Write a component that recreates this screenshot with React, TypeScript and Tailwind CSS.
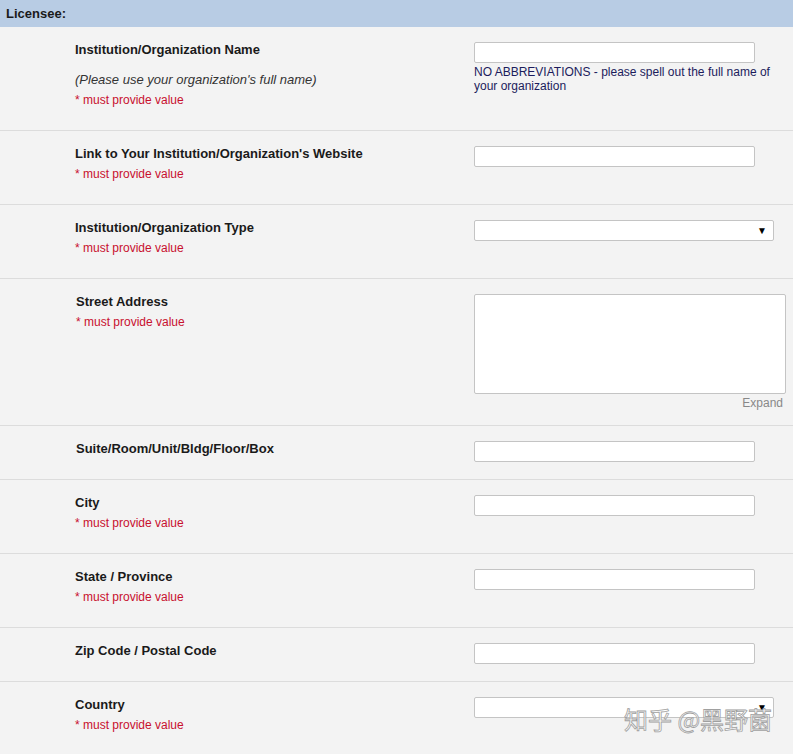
import React from "react";

const font = { fontFamily: '"Liberation Sans", Arial, sans-serif' };

function Req() {
  return <div className="mt-[6px] text-[12px] leading-[15px] text-[#c8102e]">* must provide value</div>;
}

function Input() {
  return <div className="h-[21px] w-[281px] rounded-[2px] border border-[#c4c4c4] bg-white" />;
}

function Select() {
  return (
    <div className="flex h-[21px] w-[300px] items-center justify-end rounded-[2px] border border-[#c4c4c4] bg-white pr-[6px]">
      <span className="text-[10px] leading-none text-black">▼</span>
    </div>
  );
}

function Row({
  h,
  label,
  req,
  italic,
  pl = "pl-[75px]",
  last,
  children,
}: {
  h: string;
  label: string;
  req?: boolean;
  italic?: string;
  pl?: string;
  last?: boolean;
  children: React.ReactNode;
}) {
  return (
    <div className={`flex pt-[15px] ${h} ${last ? "" : "border-b border-[#dcdcdc]"}`}>
      <div className={`w-[474px] shrink-0 ${pl}`}>
        <div className="text-[13px] font-bold leading-[15px] text-[#1a1a1a]">{label}</div>
        {italic && <div className="mt-[15px] text-[13px] italic leading-[15px] text-[#333]">{italic}</div>}
        {req && <Req />}
      </div>
      <div className="flex-1">{children}</div>
    </div>
  );
}

export default function App() {
  return (
    <div className="relative w-[793px] overflow-hidden bg-[#f3f3f3]" style={font}>
      <div className="flex h-[27px] items-center bg-[#b8cce4] pl-[6px] text-[13px] font-bold text-[#1a1a1a]">Licensee:</div>

      <Row h="h-[104px]" label="Institution/Organization Name" italic="(Please use your organization's full name)" req>
        <Input />
        <div className="mt-[2px] w-[305px] text-[12px] leading-[14px] text-[#1c1c5c]">
          NO ABBREVIATIONS - please spell out the full name of your organization
        </div>
      </Row>

      <Row h="h-[74px]" label="Link to Your Institution/Organization's Website" req>
        <Input />
      </Row>

      <Row h="h-[74px]" label="Institution/Organization Type" req>
        <Select />
      </Row>

      <Row h="h-[147px]" label="Street Address" req pl="pl-[76px]">
        <div className="w-[312px]">
          <div className="h-[100px] w-[312px] rounded-[2px] border border-[#c4c4c4] bg-white" />
          <div className="mt-[2px] pr-[3px] text-right text-[12px] leading-[14px] text-[#888]">Expand</div>
        </div>
      </Row>

      <Row h="h-[54px]" label="Suite/Room/Unit/Bldg/Floor/Box" pl="pl-[76px]">
        <Input />
      </Row>

      <Row h="h-[74px]" label="City" req>
        <Input />
      </Row>

      <Row h="h-[74px]" label="State / Province" req>
        <Input />
      </Row>

      <Row h="h-[54px]" label="Zip Code / Postal Code">
        <Input />
      </Row>

      <Row h="h-[73px]" label="Country" req last>
        <Select />
      </Row>

      <div
        className="pointer-events-none absolute left-[624px] top-[704px] whitespace-nowrap text-[24px] leading-[30px] text-white/80 [-webkit-text-stroke:0.8px_#a0a0a0]"
        style={{ fontFamily: '"Noto Sans CJK SC", "Noto Sans", sans-serif' }}
      >
        知乎 @黑野菌
      </div>
    </div>
  );
}
